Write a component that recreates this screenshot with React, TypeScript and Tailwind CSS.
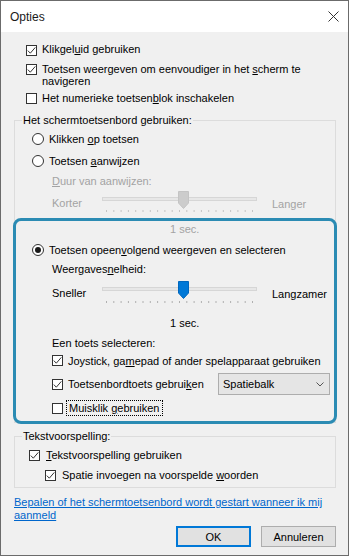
import React from 'react'

const font = { fontFamily: '"Liberation Sans", Arial, sans-serif' }

const Checkbox = ({ checked }: { checked?: boolean }) => (
  <span className="w-[11px] h-[11px] shrink-0 border border-[#333333] bg-white flex items-center justify-center">
    {checked && (
      <svg width="9" height="9" viewBox="0 0 9 9">
        <path d="M0.8 4.6 L3.3 7.2 L8.3 1.4" fill="none" stroke="#333333" strokeWidth="1" />
      </svg>
    )}
  </span>
)

const Radio = ({ checked }: { checked?: boolean }) => (
  <span className="w-[12px] h-[12px] shrink-0 rounded-full border border-[#333333] bg-white flex items-center justify-center">
    {checked && <span className="w-[6px] h-[6px] rounded-full bg-[#1a1a1a]" />}
  </span>
)

const Slider = ({
  left,
  right,
  disabled
}: {
  left: string
  right: string
  disabled?: boolean
}) => {
  const ticks = Array.from({ length: 21 }, (_, i) => 4 + i * 7.3)
  return (
    <div className={`flex h-[24px] ${disabled ? 'text-[#a3a3a3]' : 'text-black'}`}>
      <div className="w-[50px] pt-[7px]">{left}</div>
      <svg width="155" height="24" viewBox="0 0 155 24" className="shrink-0">
        <rect x="0.5" y="7.5" width="154" height="3" fill="#e7e7e7" stroke="#d6d6d6" />
        {ticks.map((x) => (
          <rect
            key={x}
            x={x}
            y={disabled ? 20 : 21}
            width="1"
            height="2"
            fill={disabled ? '#c4c4c4' : '#b0b0b0'}
          />
        ))}
        <path
          d="M76.5 1.5 H86.5 V13 L81.5 18.5 L76.5 13 Z"
          fill={disabled ? '#cccccc' : '#0078d7'}
          stroke={disabled ? '#c4c4c4' : '#0067be'}
          strokeWidth="1"
        />
      </svg>
      <div className="ml-[15px] pt-[8px]">{right}</div>
    </div>
  )
}

const App = () => {
  return (
    <div className="w-[350px] h-[557px] bg-white text-[11px] leading-[12px] text-black" style={font}>
      <div className="w-[349px] h-[556px] border border-[#6b6b6b] flex flex-col">
        {/* title bar */}
        <div className="h-[31px] bg-white flex items-center justify-between pl-[9px] pr-[9px]">
          <span className="text-[12px] text-[#1a1a1a]">Opties</span>
          <svg width="11" height="11" viewBox="0 0 11 11">
            <path d="M0.5 0.5 L10.5 10.5 M10.5 0.5 L0.5 10.5" stroke="#333333" strokeWidth="1" />
          </svg>
        </div>

        <div className="flex-1 bg-[#f0f0f0] pl-[13px] pr-[12px] flex flex-col">
          <div className="mt-[11px] pl-[12px] flex items-start gap-[5px]">
            <span className="mt-[2px]">
              <Checkbox checked />
            </span>
            <span>
              Klikgel<u>u</u>id gebruiken
            </span>
          </div>
          <div className="mt-[7px] pl-[12px] flex items-start gap-[5px]">
            <span className="mt-[1px]">
              <Checkbox checked />
            </span>
            <span className="whitespace-nowrap">
              Toetsen weergeven om eenvoudiger in het <u>s</u>cherm te
              <br />
              navigeren
            </span>
          </div>
          <div className="mt-[5px] pl-[12px] flex items-start gap-[5px]">
            <span className="mt-[1px]">
              <Checkbox />
            </span>
            <span>
              Het numerieke toetsen<u>b</u>lok inschakelen
            </span>
          </div>

          {/* schermtoetsenbord group */}
          <fieldset className="mt-[10px] border border-[#dcdcdc]">
            <legend className="ml-[7px] px-[1px]">Het schermtoetsenbord gebruiken:</legend>
            <div className="mt-[2px] ml-[17px] h-[22px] flex items-center gap-[5px]">
              <Radio />
              <span>
                Klikken <u>o</u>p toetsen
              </span>
            </div>
            <div className="ml-[17px] h-[22px] flex items-center gap-[5px]">
              <Radio />
              <span>
                Toetsen <u>a</u>anwijzen
              </span>
            </div>
            <div className="ml-[37px] h-[18px] flex items-center text-[#a3a3a3]">
              <span>
                <u>D</u>uur van aanwijzen:
              </span>
            </div>
            <div className="ml-[37px]">
              <Slider left="Korter" right="Langer" disabled />
            </div>

            {/* highlighted part */}
            <div className="mt-[4px] -mx-[2px] -mb-[2px] border-[3px] border-[#2b8bb3] rounded-[8px] pb-[4px]">
              <div className="mt-[2px] pl-[154px] text-[#a3a3a3]">1 sec.</div>
              <div className="mt-[5px] ml-[16px] h-[20px] flex items-center gap-[5px]">
                <Radio checked />
                <span>
                  Toetsen opeen<u>v</u>olgend weergeven en selecteren
                </span>
              </div>
              <div className="ml-[36px] h-[17px] flex items-center">
                <span>
                  Weergaves<u>n</u>elheid:
                </span>
              </div>
              <div className="mt-[3px] ml-[36px]">
                <Slider left="Sneller" right="Langzamer" />
              </div>
              <div className="mt-[13px] pl-[154px]">1 sec.</div>
              <div className="mt-[8px] ml-[36px]">Een toets selecteren:</div>
              <div className="ml-[36px] h-[23px] flex items-center gap-[5px]">
                <Checkbox checked />
                <span>
                  Joystick, ga<u>m</u>epad of ander spelapparaat gebruiken
                </span>
              </div>
              <div className="mt-[1px] ml-[36px] mr-[4px] h-[22px] flex items-center gap-[5px]">
                <Checkbox checked />
                <span>
                  Toetsenbordtoets gebrui<u>k</u>en
                </span>
                <div className="ml-auto w-[112px] h-[22px] bg-[#e5e5e5] border border-[#adadad] flex items-center justify-between pl-[4px] pr-[5px]">
                  <span className="text-[11px]">Spatiebalk</span>
                  <svg width="8" height="5" viewBox="0 0 8 5">
                    <path d="M0.5 0.5 L4 4 L7.5 0.5" fill="none" stroke="#555555" strokeWidth="1" />
                  </svg>
                </div>
              </div>
              <div className="mt-[4px] ml-[36px] h-[18px] flex items-center gap-[3px]">
                <Checkbox />
                <span className="h-[16px] px-[2px] flex items-center border border-dotted border-black">
                  <span>
                    Muisklik <u>g</u>ebruiken
                  </span>
                </span>
              </div>
            </div>
          </fieldset>

          {/* tekstvoorspelling group */}
          <fieldset className="mt-[7px] border border-[#dcdcdc] pb-[3px]">
            <legend className="ml-[7px] px-[1px]">Tekstvoorspelling:</legend>
            <div className="mt-[4px] ml-[14px] h-[18px] flex items-center gap-[6px]">
              <Checkbox checked />
              <span>
                <u>T</u>ekstvoorspelling gebruiken
              </span>
            </div>
            <div className="mt-[2px] ml-[30px] h-[18px] flex items-center gap-[6px]">
              <Checkbox checked />
              <span>
                Spatie invoegen na voorspelde <u>w</u>oorden
              </span>
            </div>
          </fieldset>

          <a className="mt-[8px] leading-[13px] text-[#0066cc] underline whitespace-nowrap" href="#">
            Bepalen of het schermtoetsenbord wordt gestart wanneer ik mij
            <br />
            aanmeld
          </a>

          <div className="mt-[4px] flex justify-end gap-[10px]">
            <button className="w-[75px] h-[21px] bg-[#e1e1e1] border-2 border-[#0078d7] text-[11px]">
              OK
            </button>
            <button className="w-[75px] h-[21px] bg-[#e1e1e1] border border-[#adadad] text-[11px]">
              Annuleren
            </button>
          </div>
        </div>
      </div>
    </div>
  )
}

export default App
